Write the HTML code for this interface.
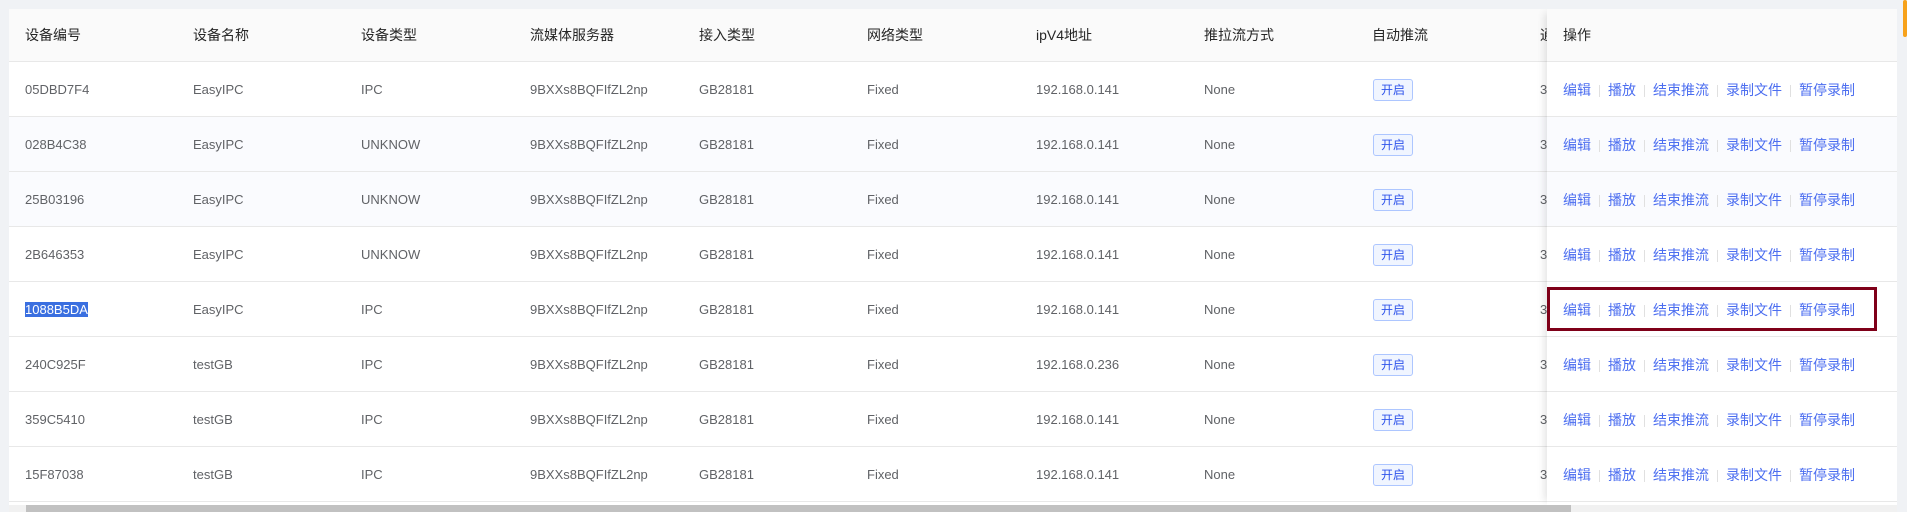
<!DOCTYPE html>
<html><head><meta charset="utf-8"><style>
*{margin:0;padding:0;box-sizing:border-box}
body{width:1907px;height:512px;background:#f0f2f5;position:relative;overflow:hidden;font-family:"Liberation Sans","Noto Sans CJK SC",sans-serif;font-size:14px;color:#606266}
.tbl{position:absolute;left:9px;top:9px;width:1888px;height:496px;background:#fff;overflow:hidden}
.hdr{position:absolute;left:0;top:0;width:100%;height:53px;background:#fafafa;border-bottom:1px solid #e8e8e8}
.row{position:absolute;left:0;width:100%;height:55px;border-bottom:1px solid #e8e8e8}
.c{position:absolute;white-space:nowrap;line-height:20px}
.hdr .c{top:16px;color:#262626}
.row .c{top:18px;font-size:13px}
.tag{position:absolute;top:17px;width:40px;height:22px;border:1px solid #adc6ff;background:#f0f5ff;color:#2f54eb;border-radius:3px;font-size:12px;text-align:center;line-height:20px}
.fix{position:absolute;left:1538px;top:0;width:350px;height:496px;background:transparent;box-shadow:-6px 0 8px -4px rgba(0,0,0,.12)}
.fc{position:absolute;left:0;width:350px;height:55px;border-bottom:1px solid #e8e8e8}
.lk{position:absolute;top:18px;color:#4c6ef0;line-height:20px;white-space:nowrap}
.sp{position:absolute;top:23px;width:1px;height:12px;background:#e0e0e0}
.sel{background:#3a6fe0;color:#fff}
</style></head><body>
<div class="tbl">
<div class="hdr">
<span class="c" style="left:16px">设备编号</span><span class="c" style="left:184px">设备名称</span><span class="c" style="left:352px">设备类型</span><span class="c" style="left:521px">流媒体服务器</span><span class="c" style="left:690px">接入类型</span><span class="c" style="left:858px">网络类型</span><span class="c" style="left:1027px">ipV4地址</span><span class="c" style="left:1195px">推拉流方式</span><span class="c" style="left:1363px">自动推流</span><span class="c" style="left:1531px">通</span>
</div>
<div id="rows"></div>
<div class="fix" id="fix"><div class="fc" style="top:0;height:53px;background:#fafafa"><span class="c" style="left:16px;top:16px;color:#262626">操作</span></div></div>
</div>
<div style="position:absolute;left:9px;top:505px;width:1888px;height:7px;background:#f1f1f1"></div>
<div style="position:absolute;left:26px;top:505px;width:1545px;height:7px;background:#c1c1c1"></div>
<div style="position:absolute;left:1903px;top:0;width:4px;height:37px;background:#f7a21b;border-radius:2px"></div>
<div style="position:absolute;left:1547px;top:287px;width:330px;height:44px;border:3px solid #7f0019"></div>
<script>
var d=[["05DBD7F4","EasyIPC","IPC","192.168.0.141"],["028B4C38","EasyIPC","UNKNOW","192.168.0.141"],["25B03196","EasyIPC","UNKNOW","192.168.0.141"],["2B646353","EasyIPC","UNKNOW","192.168.0.141"],["1088B5DA","EasyIPC","IPC","192.168.0.141"],["240C925F","testGB","IPC","192.168.0.236"],["359C5410","testGB","IPC","192.168.0.141"],["15F87038","testGB","IPC","192.168.0.141"]];
var h="",f="";
d.forEach(function(r,i){var t=53+i*55;var bg=(i==1||i==2)?"#fafbfe":"#fff";
var id=i==4?'<span class="sel">'+r[0]+'</span>':r[0];
h+='<div class="row" style="top:'+t+'px;background:'+bg+'"><span class="c" style="left:16px">'+id+'</span><span class="c" style="left:184px">'+r[1]+'</span><span class="c" style="left:352px">'+r[2]+'</span><span class="c" style="left:521px">9BXXs8BQFIfZL2np</span><span class="c" style="left:690px">GB28181</span><span class="c" style="left:858px">Fixed</span><span class="c" style="left:1027px">'+r[3]+'</span><span class="c" style="left:1195px">None</span><span class="tag" style="left:1364px">开启</span><span class="c" style="left:1531px">3</span></div>';
f+='<div class="fc" style="top:'+t+'px;background:'+bg+'"><span class="lk" style="left:16px">编辑</span><span class="sp" style="left:52px"></span><span class="lk" style="left:61px">播放</span><span class="sp" style="left:97px"></span><span class="lk" style="left:106px">结束推流</span><span class="sp" style="left:170px"></span><span class="lk" style="left:179px">录制文件</span><span class="sp" style="left:243px"></span><span class="lk" style="left:252px">暂停录制</span></div>';});
document.getElementById("rows").innerHTML=h;document.getElementById("fix").innerHTML+=f;
</script>
</body></html>
